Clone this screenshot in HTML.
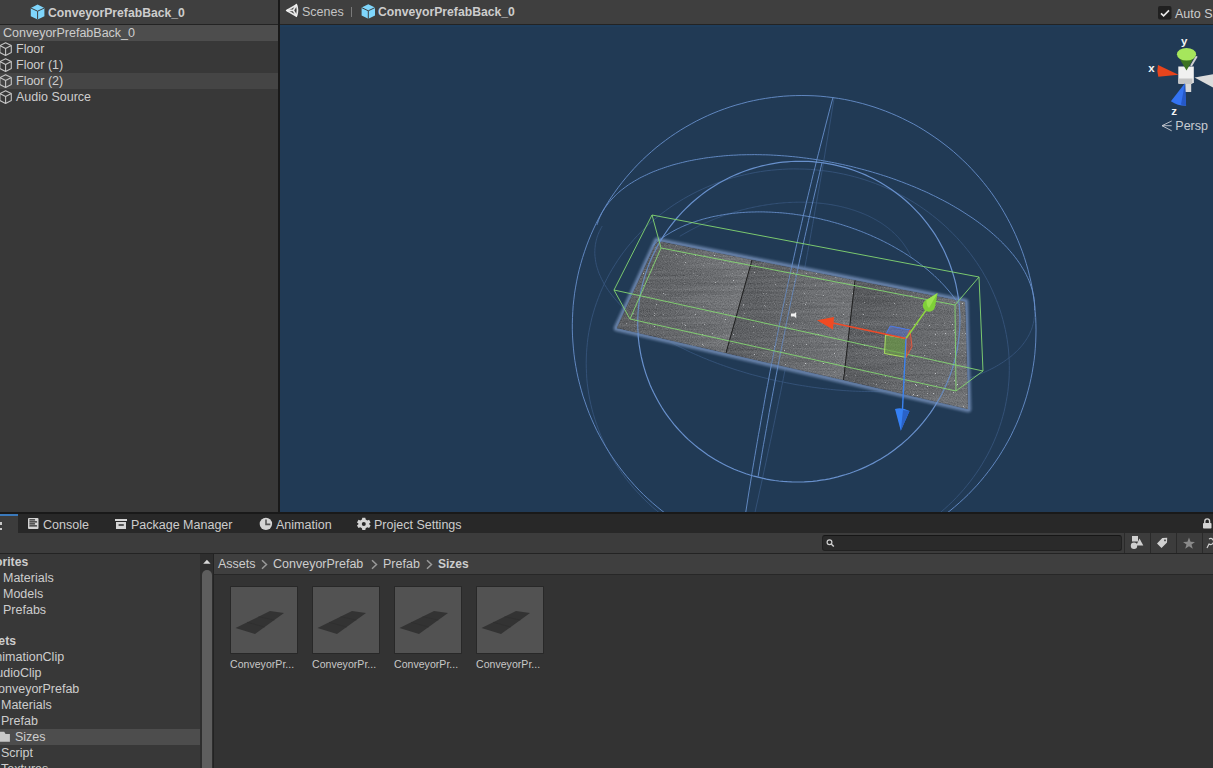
<!DOCTYPE html>
<html><head><meta charset="utf-8">
<style>
*{box-sizing:border-box;margin:0;padding:0}
html,body{width:1213px;height:768px;overflow:hidden;background:#383838;font-family:"Liberation Sans",sans-serif;font-size:12.5px;color:#cdcdcd}
.a{position:absolute}
.t{position:absolute;white-space:nowrap;line-height:16px;height:16px}
.b{font-weight:bold;font-size:12.2px}
svg{position:absolute;overflow:visible}
</style></head><body>
<!-- HIERARCHY -->
<div class="a" style="left:0;top:0;width:278px;height:24px;background:#3f3f3f"></div>
<div class="a" style="left:0;top:24px;width:278px;height:1px;background:#232323"></div>
<div class="a" style="left:0;top:25px;width:278px;height:16px;background:#4d4d4d"></div>
<div class="a" style="left:0;top:73px;width:278px;height:16px;background:#454545"></div>
<svg style="left:0;top:0" width="278" height="110">
  <g fill="#7fd6fc">
    <path d="M37.6 4.6 L44.4 8 L44.4 16.2 L37.6 19.4 L30.8 16.2 L30.8 8 Z"/>
  </g>
  <g stroke="#3f3f3f" stroke-width="1" fill="none">
    <path d="M30.8 8 L37.6 11.2 L44.4 8 M37.6 11.2 L37.6 19.4"/>
  </g>
  <g stroke="#c4c4c4" stroke-width="1.1" fill="none" stroke-linejoin="round">
    <g transform="translate(0,41)"><path d="M5.6 1.7 L11.3 4.6 L11.3 11.5 L5.6 14.4 L-0.1 11.5 L-0.1 4.6 Z M-0.1 4.6 L5.6 7.5 L11.3 4.6 M5.6 7.5 L5.6 14.4"/></g>
    <g transform="translate(0,57)"><path d="M5.6 1.7 L11.3 4.6 L11.3 11.5 L5.6 14.4 L-0.1 11.5 L-0.1 4.6 Z M-0.1 4.6 L5.6 7.5 L11.3 4.6 M5.6 7.5 L5.6 14.4"/></g>
    <g transform="translate(0,73)"><path d="M5.6 1.7 L11.3 4.6 L11.3 11.5 L5.6 14.4 L-0.1 11.5 L-0.1 4.6 Z M-0.1 4.6 L5.6 7.5 L11.3 4.6 M5.6 7.5 L5.6 14.4"/></g>
    <g transform="translate(0,89)"><path d="M5.6 1.7 L11.3 4.6 L11.3 11.5 L5.6 14.4 L-0.1 11.5 L-0.1 4.6 Z M-0.1 4.6 L5.6 7.5 L11.3 4.6 M5.6 7.5 L5.6 14.4"/></g>
  </g>
</svg>
<div class="t b" style="left:48px;top:5px">ConveyorPrefabBack_0</div>
<div class="t" style="left:3px;top:25px">ConveyorPrefabBack_0</div>
<div class="t" style="left:16px;top:41px">Floor</div>
<div class="t" style="left:16px;top:57px">Floor (1)</div>
<div class="t" style="left:16px;top:73px">Floor (2)</div>
<div class="t" style="left:16px;top:89px">Audio Source</div>
<div class="a" style="left:278px;top:0;width:2px;height:512px;background:#191919"></div>
<!-- SCENE HEADER -->
<div class="a" style="left:280px;top:0;width:933px;height:24px;background:#3f3f3f"></div>
<div class="a" style="left:280px;top:24px;width:933px;height:1px;background:#232323"></div>
<svg style="left:280px;top:0" width="933" height="24">
  <g stroke="#e8e8e8" stroke-width="1.7" fill="none" stroke-linejoin="round">
    <path d="M6.8 10.4 L16.4 4.9 Q18.6 10.4 16.4 15.9 Z"/>
    <path d="M13.3 10.4 L7.5 10.4 M13.3 10.4 L16 5.8 M13.3 10.4 L16 15"/>
  </g>
  <path d="M16.9 3.6 L14.5 5.6 L17.3 6.5 Z M16.9 17.2 L14.5 15.2 L17.3 14.3 Z M5.6 10.4 L8.4 9 L8.4 11.8 Z" fill="#f0f0f0"/>
  <g fill="#7fd6fc">
    <path d="M88.3 4.2 L95 7.6 L95 15.6 L88.3 18.8 L81.6 15.6 L81.6 7.6 Z"/>
  </g>
  <g stroke="#3f3f3f" stroke-width="1" fill="none">
    <path d="M81.6 7.6 L88.3 10.8 L95 7.6 M88.3 10.8 L88.3 18.8"/>
  </g>
  <rect x="878" y="6" width="13.5" height="13.5" rx="2" fill="#202020"/>
  <path d="M881 13.4 L883.6 15.8 L889 10.4" stroke="#e8e8e8" stroke-width="1.7" fill="none"/>
</svg>
<div class="t" style="left:302px;top:4px;color:#c4c4c4">Scenes</div>
<div class="a" style="left:351px;top:7px;width:1px;height:10px;background:#7a7a7a"></div>
<div class="t b" style="left:378px;top:4px">ConveyorPrefabBack_0</div>
<div class="t" style="left:1175px;top:6px">Auto Save</div>
<!-- SCENE VIEW -->
<div class="a" id="scene" style="left:280px;top:25px;width:933px;height:487px;background:#213a55;overflow:hidden"></div>
<!--SCENE--><svg style="left:280px;top:25px" width="933" height="487" viewBox="280 25 933 487">
<defs>
<filter id="noise" x="0" y="0" width="100%" height="100%" color-interpolation-filters="sRGB">
  <feTurbulence type="fractalNoise" baseFrequency="0.85" numOctaves="2" seed="7" result="n"/>
  <feColorMatrix in="n" type="matrix" values="1 0 0 0 0  1 0 0 0 0  1 0 0 0 0  0 0 0 0 1" result="g"/>
  <feTurbulence type="fractalNoise" baseFrequency="0.012 0.35" numOctaves="2" seed="11" result="n2"/>
  <feColorMatrix in="n2" type="matrix" values="1 0 0 0 0  1 0 0 0 0  1 0 0 0 0  0 0 0 0 1" result="g2"/>
  <feTurbulence type="turbulence" baseFrequency="1.1" numOctaves="1" seed="23" result="n3"/>
  <feColorMatrix in="n3" type="matrix" values="0 0 0 0 1  0 0 0 0 1  0 0 0 0 1  6 0 0 0 -2.9" result="sp"/>
  <feComposite in="SourceGraphic" in2="g" operator="arithmetic" k1="0" k2="1" k3="0.22" k4="-0.11" result="m"/>
  <feComposite in="m" in2="g2" operator="arithmetic" k1="0" k2="1" k3="0.12" k4="-0.06" result="m2"/>
  <feComposite in="sp" in2="m2" operator="arithmetic" k1="0" k2="0.35" k3="1" k4="0" result="m3"/>
  <feComposite in="m3" in2="SourceAlpha" operator="in"/>
</filter>
<filter id="glow" x="-10%" y="-10%" width="120%" height="120%"><feGaussianBlur stdDeviation="1.2"/></filter>
<clipPath id="sc"><rect x="280" y="25" width="933" height="487"/></clipPath>
<clipPath id="outs"><path clip-rule="evenodd" d="M280 25 H1213 V512 H280 Z M657 241 L965 302 L968 409 L617 328 Z"/></clipPath>
<clipPath id="ins"><path d="M657 241 L965 302 L968 409 L617 328 Z"/></clipPath>
</defs>
<g clip-path="url(#sc)">
<rect x="280" y="25" width="933" height="2" fill="#1f3d5b"/>
<path d="M782.3 561.6 L776.8 561.1 L771.2 560.5 L765.7 559.7 L760.2 558.8 L754.8 557.7 L749.3 556.6 L743.9 555.2 L738.6 553.8 L733.3 552.2 L728.0 550.5 L722.8 548.7 L717.6 546.8 L712.5 544.7 L707.4 542.5 L702.4 540.2 L697.5 537.7 L692.6 535.2 L687.8 532.5 L683.1 529.7 L678.5 526.8 L673.9 523.7 L669.5 520.6 L665.1 517.4 L660.8 514.0 L656.6 510.6 L652.5 507.1 L648.5 503.4 L644.6 499.7 L640.8 495.8 L637.2 491.9 L633.6 487.9 L630.1 483.8 L626.8 479.7 L623.6 475.4 L620.5 471.1 L617.5 466.7 L614.7 462.2 L611.9 457.7 L609.3 453.1 L606.9 448.4 L604.6 443.7 L602.4 438.9 L600.3 434.1 L598.4 429.2 L596.6 424.3 L594.9 419.3 L593.4 414.4 L592.0 409.3 L590.8 404.3 L589.7 399.2 L588.8 394.1 L588.0 389.0 L587.3 383.8 L586.8 378.7 L586.5 373.5 L586.3 368.3 L586.2 363.2 L586.3 358.0 L586.5 352.8 L586.9 347.7 L587.4 342.5 L588.0 337.4 L588.8 332.3 L589.8 327.2 L590.9 322.2 L592.1 317.1 L593.5 312.1 L595.0 307.2 L596.7 302.3 L598.5 297.4 L600.4 292.6 L602.5 287.8 L604.7 283.1 L607.1 278.4 L609.5 273.8 L612.1 269.3 L614.9 264.8 L617.7 260.4 L620.7 256.0 L623.8 251.8 L627.0 247.6 L630.4 243.5 L633.8 239.5 L637.4 235.6 L641.1 231.7 L644.9 228.0 L648.8 224.4 L652.8 220.8 L656.9 217.4 L661.1 214.0 L665.4 210.8 L669.8 207.6 L674.2 204.6 L678.8 201.7 L683.4 198.9 L688.2 196.2 L693.0 193.6 L697.8 191.2 L702.8 188.9 L707.8 186.7 L712.8 184.6 L718.0 182.6 L723.1 180.8 L728.4 179.1 L733.6 177.5 L739.0 176.1 L744.3 174.8 L749.7 173.6 L755.2 172.5 L760.6 171.6 L766.1 170.8 L771.6 170.2 L777.1 169.7 L782.7 169.3 L788.2 169.0 L793.8 168.9 L799.4 169.0 L804.9 169.1 L810.5 169.4 L816.0 169.9 L821.6 170.5 L827.1 171.2 L832.6 172.0 L838.1 173.0 L843.5 174.1 L848.9 175.3 L854.3 176.7 L859.6 178.2 L864.9 179.8 L870.2 181.6 L875.4 183.5 L880.5 185.5 L885.6 187.7 L890.7 189.9 L895.6 192.3 L900.5 194.8 L905.3 197.4 L910.1 200.2 L914.8 203.0 L919.4 206.0 L923.9 209.1 L928.3 212.2 L932.6 215.5 L936.9 218.9 L941.0 222.4 L945.1 226.0 L949.0 229.7 L952.8 233.5 L956.6 237.4 L960.2 241.3 L963.7 245.4 L967.1 249.5 L970.4 253.7 L973.5 258.0 L976.6 262.4 L979.5 266.8 L982.3 271.3 L984.9 275.9 L987.5 280.5 L989.9 285.2 L992.1 290.0 L994.2 294.8 L996.2 299.6 L998.1 304.5 L999.8 309.4 L1001.4 314.4 L1002.8 319.4 L1004.1 324.5 L1005.3 329.5 L1006.3 334.6 L1007.2 339.7 L1007.9 344.9 L1008.5 350.0 L1008.9 355.2 L1009.2 360.3 L1009.3 365.5 L1009.3 370.7 L1009.2 375.9 L1008.9 381.0 L1008.4 386.2 L1007.9 391.3 L1007.1 396.4 L1006.2 401.5 L1005.2 406.6 L1004.1 411.6 L1002.7 416.6 L1001.3 421.6 L999.7 426.5 L998.0 431.4 L996.1 436.3 L994.1 441.1 L992.0 445.8 L989.7 450.5 L987.3 455.2 L984.7 459.7 L982.1 464.2 L979.3 468.7 L976.3 473.1 L973.3 477.3 L970.1 481.6 L966.8 485.7 L963.4 489.8 L959.9 493.7 L956.3 497.6 L952.6 501.4 L948.7 505.1 L944.8 508.7 L940.7 512.2 L936.6 515.6 L932.3 518.9 L928.0 522.1 L923.6 525.1 L919.0 528.1 L914.4 531.0 L909.8 533.7 L905.0 536.3 L900.2 538.8 L895.3 541.2 L890.3 543.5 L885.3 545.6 L880.2 547.7 L875.0 549.6 L869.8 551.3 L864.6 553.0 L859.3 554.5 L853.9 555.9 L848.5 557.1 L843.1 558.2 L837.7 559.2 L832.2 560.1 L826.7 560.8 L821.2 561.3 L815.6 561.8 L810.1 562.1 L804.5 562.3 L799.0 562.3 L793.4 562.2 L787.8 562.0 L782.3 561.6" stroke="#35537a" stroke-width="0.9" fill="none" />
<path d="M1034.6 310.1 L1034.7 311.6 L1034.6 313.1 L1034.6 314.6 L1034.5 316.1 L1034.3 317.6 L1034.1 319.1 L1033.9 320.5 L1033.6 322.0 L1033.3 323.4 L1032.9 324.9 L1032.5 326.3 L1032.1 327.8 L1031.6 329.2 L1031.0 330.6 L1030.4 332.0 L1029.8 333.4 L1029.1 334.8 L1028.4 336.1 L1027.6 337.5 L1026.8 338.8 L1025.9 340.2 L1025.0 341.5 L1024.1 342.8 L1023.1 344.1 L1022.1 345.4 L1021.0 346.7 L1019.9 347.9 L1018.7 349.2 L1017.6 350.4 L1016.3 351.6 L1015.0 352.8 L1013.7 354.0 L1012.4 355.2 L1011.0 356.4 L1009.5 357.5 L1008.0 358.6 L1006.5 359.7 L1005.0 360.8 L1003.4 361.9 L1001.7 363.0 L1000.0 364.0 L998.3 365.1 L996.6 366.1 L994.8 367.1 L993.0 368.1 L991.1 369.0 L989.2 370.0 L987.3 370.9 L985.3 371.8 L983.3 372.7 L981.3 373.6 L979.2 374.4 L977.1 375.3 L975.0 376.1 L972.8 376.9 L970.6 377.6 L968.3 378.4 L966.1 379.1 L963.8 379.9 L961.4 380.5 L959.1 381.2 L956.7 381.9 L954.3 382.5 L951.8 383.1 L949.4 383.7 L946.9 384.3 L944.3 384.9 L941.8 385.4 L939.2 385.9 L936.6 386.4 L934.0 386.9 L931.3 387.3 L928.6 387.7 L925.9 388.1 L923.2 388.5 L920.4 388.9 L917.7 389.2 L914.9 389.5 L912.1 389.8 L909.2 390.1 L906.4 390.4 L903.5 390.6 L900.6 390.8 L897.7 391.0 L894.8 391.1 L891.9 391.3 L888.9 391.4 L886.0 391.5 L883.0 391.6 L880.0 391.6 L877.0 391.6 L873.9 391.6 L870.9 391.6 L867.9 391.6 L864.8 391.5 L861.7 391.4 L858.6 391.3 L855.6 391.2 L852.5 391.1 L849.4 390.9 L846.3 390.7 L843.1 390.5 L840.0 390.2 L836.9 390.0 L833.8 389.7 L830.6 389.4 L827.5 389.0 L824.3 388.7 L821.2 388.3 L818.0 387.9 L814.9 387.5 L811.8 387.1 L808.6 386.6 L805.5 386.1 L802.3 385.6 L799.2 385.1 L796.0 384.6 L792.9 384.0 L789.8 383.4 L786.7 382.8 L783.5 382.2 L780.4 381.5 L777.3 380.9 L774.2 380.2 L771.1 379.5 L768.1 378.7 L765.0 378.0 L761.9 377.2 L758.9 376.4 L755.9 375.6 L752.8 374.8 L749.8 374.0 L746.8 373.1 L743.8 372.2 L740.9 371.3 L737.9 370.4 L735.0 369.5 L732.0 368.5 L729.1 367.5 L726.2 366.5 L723.4 365.5 L720.5 364.5 L717.7 363.5 L714.9 362.4 L712.1 361.3 L709.3 360.3 L706.6 359.1 L703.8 358.0 L701.1 356.9 L698.5 355.7 L695.8 354.6 L693.2 353.4 L690.5 352.2 L688.0 351.0 L685.4 349.7 L682.9 348.5 L680.4 347.3 L677.9 346.0 L675.4 344.7 L673.0 343.4 L670.6 342.1 L668.3 340.8 L665.9 339.5 L663.6 338.1 L661.4 336.8 L659.1 335.4 L656.9 334.0 L654.8 332.6 L652.6 331.2 L650.5 329.8 L648.4 328.4 L646.4 327.0 L644.4 325.6 L642.4 324.1 L640.5 322.7 L638.6 321.2 L636.7 319.7 L634.9 318.3 L633.1 316.8 L631.3 315.3 L629.6 313.8 L627.9 312.3 L626.3 310.8 L624.7 309.3 L623.1 307.7 L621.6 306.2 L620.1 304.7 L618.7 303.2 L617.3 301.6 L615.9 300.1 L614.6 298.5 L613.3 297.0 L612.1 295.4 L610.9 293.9 L609.7 292.3 L608.6 290.7 L607.5 289.2 L606.5 287.6 L605.5 286.0 L604.5 284.5 L603.6 282.9 L602.8 281.3 L602.0 279.8 L601.2 278.2 L600.5 276.6 L599.8 275.1 L599.1 273.5 L598.5 271.9 L598.0 270.4 L597.5 268.8 L597.0 267.3 L596.6 265.7 L596.2 264.2 L595.9 262.6 L595.6 261.1 L595.4 259.6 L595.2 258.0 L595.0 256.5 L594.9 255.0 L594.8 253.5 L594.8 251.9 L594.9 250.4 L594.9 248.9 L595.1 247.5 L595.2 246.0 L595.4 244.5 L595.7 243.0 L596.0 241.6 L596.3 240.1 L596.7 238.7 L597.1 237.2 L597.6 235.8 L598.1 234.4 L598.7 233.0 L599.3 231.6 L600.0 230.2 L600.7 228.8 L601.4 227.5 L602.2 226.1" stroke="#35537a" stroke-width="0.9" fill="none" />
<path d="M679.8 236.3 L680.8 235.7 L681.8 235.1 L682.9 234.5 L683.9 233.9 L684.9 233.3 L686.0 232.7 L687.0 232.1 L688.0 231.6 L689.1 231.0 L690.1 230.4 L691.2 229.8 L692.3 229.3 L693.3 228.7 L694.4 228.2 L695.5 227.6 L696.5 227.1 L697.6 226.6 L698.7 226.0 L699.8 225.5 L700.9 225.0 L702.0 224.5 L703.1 223.9 L704.2 223.4 L705.3 222.9 L706.4 222.4 L707.5 222.0 L708.7 221.5 L709.8 221.0 L710.9 220.5 L712.0 220.1 L713.2 219.6 L714.3 219.1 L715.4 218.7 L716.6 218.2 L717.7 217.8 L718.9 217.4 L720.0 216.9 L721.2 216.5 L722.3 216.1 L723.5 215.7 L724.6 215.3 L725.8 214.9 L727.0 214.5 L728.1 214.1 L729.3 213.7 L730.5 213.3 L731.6 213.0 L732.8 212.6 L734.0 212.2 L735.2 211.9 L736.4 211.5 L737.5 211.2 L738.7 210.9 L739.9 210.5 L741.1 210.2 L742.3 209.9 L743.5 209.6 L744.7 209.3 L745.9 209.0 L747.0 208.7 L748.2 208.4 L749.4 208.1 L750.6 207.9 L751.8 207.6 L753.0 207.3 L754.2 207.1 L755.4 206.8 L756.6 206.6 L757.8 206.4 L759.0 206.1 L760.2 205.9 L761.4 205.7 L762.6 205.5 L763.8 205.3 L765.0 205.1 L766.2 204.9 L767.4 204.7 L768.6 204.5 L769.8 204.4 L771.0 204.2 L772.2 204.0 L773.4 203.9 L774.6 203.7 L775.8 203.6 L777.0 203.5 L778.2 203.3 L779.4 203.2 L780.6 203.1 L781.7 203.0 L782.9 202.9 L784.1 202.8 L785.3 202.7 L786.5 202.6 L787.7 202.6 L788.9 202.5 L790.0 202.4 L791.2 202.4 L792.4 202.3 L793.6 202.3 L794.8 202.3 L795.9 202.2 L797.1 202.2 L798.3 202.2 L799.4 202.2 L800.6 202.2 L801.8 202.2 L802.9 202.2 L804.1 202.2 L805.2 202.2 L806.4 202.3 L807.5 202.3 L808.7 202.4 L809.8 202.4 L811.0 202.5 L812.1 202.5 L813.2 202.6 L814.4 202.7 L815.5 202.8 L816.6 202.9 L817.7 203.0 L818.9 203.1 L820.0 203.2 L821.1 203.3 L822.2 203.4 L823.3 203.5 L824.4 203.7 L825.5 203.8 L826.6 204.0 L827.7 204.1 L828.8 204.3 L829.9 204.5 L830.9 204.6 L832.0 204.8 L833.1 205.0 L834.1 205.2 L835.2 205.4 L836.3 205.6 L837.3 205.8 L838.4 206.0 L839.4 206.3 L840.4 206.5 L841.5 206.7 L842.5 207.0 L843.5 207.2 L844.6 207.5 L845.6 207.8 L846.6 208.0 L847.6 208.3 L848.6 208.6 L849.6 208.9 L850.6 209.2 L851.6 209.5 L852.5 209.8 L853.5 210.1 L854.5 210.4 L855.4 210.7 L856.4 211.1 L857.3 211.4 L858.3 211.8 L859.2 212.1 L860.2 212.5 L861.1 212.8 L862.0 213.2 L862.9 213.6 L863.8 213.9 L864.7 214.3 L865.6 214.7 L866.5 215.1 L867.4 215.5 L868.3 215.9 L869.1 216.3 L870.0 216.8 L870.9 217.2 L871.7 217.6 L872.6 218.1 L873.4 218.5 L874.2 219.0 L875.1 219.4 L875.9 219.9 L876.7 220.3 L877.5 220.8 L878.3 221.3 L879.1 221.8 L879.9 222.2 L880.6 222.7 L881.4 223.2 L882.2 223.7 L882.9 224.2 L883.7 224.8 L884.4 225.3 L885.1 225.8 L885.9 226.3 L886.6 226.9 L887.3 227.4 L888.0 227.9 L888.7 228.5 L889.4 229.1 L890.1 229.6 L890.7 230.2 L891.4 230.7 L892.0 231.3 L892.7 231.9 L893.3 232.5 L894.0 233.1 L894.6 233.7 L895.2 234.3 L895.8 234.9 L896.4 235.5 L897.0 236.1 L897.6 236.7 L898.2 237.3 L898.7 237.9 L899.3 238.6 L899.8 239.2 L900.4 239.8 L900.9 240.5 L901.4 241.1 L902.0 241.8 L902.5 242.4 L903.0 243.1 L903.5 243.8 L903.9 244.4 L904.4 245.1 L904.9 245.8 L905.3 246.5 L905.8 247.1 L906.2 247.8 L906.7 248.5 L907.1 249.2 L907.5 249.9 L907.9 250.6 L908.3 251.3 L908.7 252.0 L909.1 252.7 L909.4 253.4 L909.8 254.2 L910.1 254.9 L910.5 255.6 L910.8 256.3" stroke="#35537a" stroke-width="0.9" fill="none" />
<path d="M834.1 98.0 L832.9 105.0 L831.8 112.0 L830.7 119.1 L829.5 126.1 L828.4 133.1 L827.2 140.1 L826.0 147.1 L824.9 154.1 L823.7 161.2 L822.5 168.2 L821.3 175.2 L820.1 182.2 L818.9 189.2 L817.6 196.2 L816.4 203.3 L815.2 210.3 L813.9 217.3 L812.7 224.3 L811.4 231.3 L810.2 238.3 L808.9 245.4 L807.6 252.4 L806.3 259.4 L805.0 266.4 L803.7 273.4 L802.4 280.4 L801.1 287.5 L799.8 294.5 L798.5 301.5 L797.1 308.5 L795.8 315.5 L794.4 322.5 L793.1 329.6 L791.7 336.6 L790.3 343.6 L788.9 350.6 L787.5 357.6 L786.1 364.6 L784.7 371.7 L783.3 378.7 L781.9 385.7 L780.5 392.7 L779.0 399.7 L777.6 406.7 L776.1 413.8 L774.7 420.8 L773.2 427.8 L771.8 434.8 L770.3 441.8 L768.8 448.8 L767.3 455.9 L765.8 462.9 L764.3 469.9 L762.8 476.9 L761.3 483.9 L759.7 490.9 L758.2 498.0 L756.6 505.0 L755.1 512.0" stroke="#35537a" stroke-width="0.9" fill="none" />
<path d="M657 241 L965 302 L968 409 L617 328 Z" fill="none" stroke="#6882a8" stroke-width="7" stroke-linejoin="round" filter="url(#glow)" opacity="0.85"/>
<path d="M657 241 L965 302 L968 409 L617 328 Z" fill="none" stroke="#617ba2" stroke-width="4.2" stroke-linejoin="round"/>
<linearGradient id="t1" gradientUnits="userSpaceOnUse" x1="625" y1="290" x2="745" y2="310"><stop offset="0" stop-color="#5c5e61"/><stop offset="0.55" stop-color="#67696c"/><stop offset="1" stop-color="#75777a"/></linearGradient>
<linearGradient id="t2" gradientUnits="userSpaceOnUse" x1="735" y1="310" x2="850" y2="330"><stop offset="0" stop-color="#5c5e61"/><stop offset="0.55" stop-color="#686a6d"/><stop offset="1" stop-color="#737578"/></linearGradient>
<linearGradient id="t3" gradientUnits="userSpaceOnUse" x1="850" y1="330" x2="968" y2="350"><stop offset="0" stop-color="#5b5d60"/><stop offset="0.6" stop-color="#67696c"/><stop offset="1" stop-color="#6f7174"/></linearGradient>
<g filter="url(#noise)">
<path d="M657 241 L752 260 L726 353 L617 328 Z" fill="url(#t1)" stroke="url(#t1)" stroke-width="0.6"/>
<path d="M752 260 L855 280.5 L843.5 380 L726 353 Z" fill="url(#t2)" stroke="url(#t2)" stroke-width="0.6"/>
<path d="M855 280.5 L965 302 L968 409 L843.5 380 Z" fill="url(#t3)" stroke="url(#t3)" stroke-width="0.6"/>
</g>
<path d="M752 260 L726 353 M855 280.5 L843.5 380" stroke="#202020" stroke-width="1" fill="none"/>
<g clip-path="url(#outs)"><path d="M675.6 133.3 L680.7 130.0 L685.9 126.9 L691.2 123.9 L696.5 121.0 L702.0 118.3 L707.5 115.7 L713.0 113.3 L718.7 111.0 L724.4 108.9 L730.1 106.9 L735.9 105.1 L741.8 103.5 L747.7 101.9 L753.6 100.6 L759.6 99.4 L765.6 98.4 L771.6 97.5 L777.6 96.8 L783.7 96.2 L789.8 95.8 L795.8 95.6 L801.9 95.5 L808.0 95.6 L814.1 95.8 L820.2 96.2 L826.3 96.8 L832.3 97.5 L838.4 98.4 L844.4 99.4 L850.4 100.6 L856.3 102.0 L862.3 103.5 L868.1 105.2 L874.0 107.0 L879.8 109.0 L885.5 111.1 L891.2 113.4 L896.8 115.8 L902.4 118.4 L907.8 121.1 L913.3 123.9 L918.6 126.9 L923.9 130.1 L929.0 133.4 L934.1 136.8 L939.1 140.3 L944.0 144.0 L948.9 147.8 L953.6 151.7 L958.2 155.8 L962.7 160.0 L967.1 164.2 L971.3 168.6 L975.5 173.2 L979.6 177.8 L983.5 182.5 L987.3 187.3 L991.0 192.2 L994.5 197.2 L997.9 202.3 L1001.2 207.5 L1004.3 212.8 L1007.3 218.2 L1010.2 223.6 L1012.9 229.1 L1015.5 234.7 L1017.9 240.3 L1020.2 246.0 L1022.4 251.8 L1024.4 257.6 L1026.2 263.4 L1027.9 269.3 L1029.4 275.3 L1030.8 281.2 L1032.0 287.2 L1033.0 293.3 L1033.9 299.3 L1034.7 305.4 L1035.2 311.5 L1035.7 317.6 L1035.9 323.8 L1036.0 329.9 L1035.9 336.0 L1035.7 342.1 L1035.3 348.2 L1034.8 354.3 L1034.1 360.4 L1033.2 366.4 L1032.2 372.5 L1031.0 378.4 L1029.7 384.4 L1028.2 390.3 L1026.6 396.2 L1024.8 402.0 L1022.8 407.8 L1020.7 413.5 L1018.5 419.2 L1016.1 424.8 L1013.5 430.3 L1010.9 435.8 L1008.0 441.2 L1005.0 446.5 L1001.9 451.7 L998.7 456.9 L995.3 461.9 L991.8 466.9 L988.1 471.8 L984.4 476.5 L980.5 481.2 L976.5 485.8 L972.3 490.2 L968.1 494.6 L963.7 498.8 L959.2 502.9 L954.6 506.9 L949.9 510.8 L945.2 514.5 L940.3 518.1 L935.3 521.6 L930.2 524.9 L925.1 528.1 L919.8 531.2 L914.5 534.1 L909.1 536.9 L903.6 539.6 L898.1 542.1 L892.5 544.4 L886.8 546.6 L881.1 548.7 L875.3 550.6 L869.5 552.3 L863.6 553.9 L857.7 555.3 L851.8 556.6 L845.8 557.7 L839.8 558.7 L833.7 559.5 L827.7 560.1 L821.6 560.6 L815.5 560.9 L809.4 561.1 L803.3 561.1 L797.2 560.9 L791.2 560.6 L785.1 560.1 L779.0 559.5 L773.0 558.7 L766.9 557.7 L760.9 556.6 L755.0 555.3 L749.0 553.9 L743.1 552.3 L737.3 550.5 L731.4 548.6 L725.7 546.6 L720.0 544.4 L714.3 542.0 L708.7 539.5 L703.2 536.9 L697.8 534.1 L692.4 531.2 L687.1 528.1 L681.9 524.9 L676.7 521.5 L671.7 518.1 L666.7 514.4 L661.9 510.7 L657.1 506.8 L652.4 502.8 L647.9 498.7 L643.4 494.5 L639.1 490.2 L634.9 485.7 L630.8 481.1 L626.8 476.5 L622.9 471.7 L619.2 466.8 L615.6 461.9 L612.1 456.8 L608.8 451.7 L605.5 446.4 L602.5 441.1 L599.5 435.7 L596.7 430.3 L594.1 424.7 L591.6 419.1 L589.2 413.4 L587.0 407.7 L585.0 401.9 L583.0 396.1 L581.3 390.2 L579.7 384.3 L578.2 378.3 L576.9 372.4 L575.8 366.3 L574.8 360.3 L574.0 354.2 L573.4 348.1 L572.9 342.0 L572.5 335.9 L572.3 329.8 L572.3 323.7 L572.5 317.5 L572.8 311.4 L573.2 305.3 L573.9 299.2 L574.6 293.2 L575.6 287.1 L576.7 281.1 L577.9 275.2 L579.3 269.2 L580.9 263.3 L582.6 257.5 L584.5 251.7 L586.5 245.9 L588.7 240.2 L591.0 234.6 L593.5 229.0 L596.1 223.5 L598.9 218.1 L601.8 212.7 L604.8 207.5 L608.0 202.3 L611.3 197.2 L614.8 192.2 L618.4 187.2 L622.1 182.4 L625.9 177.7 L629.9 173.1 L633.9 168.6 L638.1 164.2 L642.4 159.9 L646.9 155.7 L651.4 151.7 L656.0 147.7 L660.8 143.9 L665.6 140.3 L670.5 136.7 L675.6 133.3" stroke="#6890cc" stroke-width="0.9" fill="none" />
<path d="M597.0 224.8 L597.4 223.4 L597.9 222.0 L598.4 220.7 L598.9 219.3 L599.4 218.0 L600.0 216.7 L600.7 215.4 L601.3 214.0 L602.0 212.7 L602.7 211.5 L603.5 210.2 L604.3 208.9 L605.1 207.6 L606.0 206.4 L606.9 205.1 L607.8 203.9 L608.7 202.7 L609.7 201.5 L610.8 200.3 L611.8 199.1 L612.9 198.0 L614.0 196.8 L615.2 195.7 L616.4 194.5 L617.6 193.4 L618.8 192.3 L620.1 191.2 L621.4 190.1 L622.8 189.1 L624.1 188.0 L625.5 187.0 L627.0 185.9 L628.4 184.9 L629.9 183.9 L631.5 182.9 L633.0 182.0 L634.6 181.0 L636.2 180.1 L637.8 179.2 L639.5 178.2 L641.2 177.3 L642.9 176.5 L644.7 175.6 L646.5 174.8 L648.3 173.9 L650.1 173.1 L651.9 172.3 L653.8 171.5 L655.7 170.8 L657.7 170.0 L659.6 169.3 L661.6 168.6 L663.6 167.9 L665.7 167.2 L667.7 166.5 L669.8 165.9 L671.9 165.2 L674.0 164.6 L676.2 164.0 L678.3 163.5 L680.5 162.9 L682.7 162.4 L685.0 161.8 L687.2 161.3 L689.5 160.8 L691.8 160.4 L694.1 159.9 L696.5 159.5 L698.8 159.1 L701.2 158.7 L703.6 158.3 L706.0 157.9 L708.4 157.6 L710.8 157.3 L713.3 157.0 L715.8 156.7 L718.3 156.4 L720.8 156.2 L723.3 155.9 L725.8 155.7 L728.4 155.5 L730.9 155.3 L733.5 155.2 L736.1 155.1 L738.7 154.9 L741.3 154.8 L744.0 154.8 L746.6 154.7 L749.2 154.7 L751.9 154.7 L754.6 154.6 L757.2 154.7 L759.9 154.7 L762.6 154.8 L765.3 154.8 L768.1 154.9 L770.8 155.0 L773.5 155.2 L776.2 155.3 L779.0 155.5 L781.7 155.7 L784.5 155.9 L787.2 156.1 L790.0 156.4 L792.7 156.6 L795.5 156.9 L798.3 157.2 L801.1 157.5 L803.8 157.9 L806.6 158.2 L809.4 158.6 L812.2 159.0 L815.0 159.4 L817.7 159.9 L820.5 160.3 L823.3 160.8 L826.1 161.3 L828.8 161.8 L831.6 162.3 L834.4 162.8 L837.2 163.4 L839.9 164.0 L842.7 164.5 L845.4 165.2 L848.2 165.8 L850.9 166.4 L853.7 167.1 L856.4 167.8 L859.1 168.5 L861.8 169.2 L864.6 169.9 L867.3 170.7 L870.0 171.4 L872.6 172.2 L875.3 173.0 L878.0 173.8 L880.6 174.6 L883.3 175.5 L885.9 176.3 L888.5 177.2 L891.2 178.1 L893.8 179.0 L896.3 179.9 L898.9 180.9 L901.5 181.8 L904.0 182.8 L906.6 183.8 L909.1 184.8 L911.6 185.8 L914.1 186.8 L916.5 187.8 L919.0 188.9 L921.4 190.0 L923.9 191.0 L926.3 192.1 L928.7 193.2 L931.0 194.4 L933.4 195.5 L935.7 196.6 L938.0 197.8 L940.3 199.0 L942.6 200.1 L944.8 201.3 L947.1 202.5 L949.3 203.7 L951.5 205.0 L953.6 206.2 L955.8 207.5 L957.9 208.7 L960.0 210.0 L962.1 211.3 L964.1 212.6 L966.1 213.9 L968.1 215.2 L970.1 216.5 L972.1 217.8 L974.0 219.1 L975.9 220.5 L977.8 221.8 L979.6 223.2 L981.5 224.6 L983.3 226.0 L985.0 227.3 L986.8 228.7 L988.5 230.1 L990.2 231.5 L991.9 233.0 L993.5 234.4 L995.1 235.8 L996.7 237.2 L998.2 238.7 L999.7 240.1 L1001.2 241.6 L1002.7 243.0 L1004.1 244.5 L1005.5 246.0 L1006.9 247.4 L1008.2 248.9 L1009.5 250.4 L1010.8 251.9 L1012.0 253.4 L1013.3 254.8 L1014.4 256.3 L1015.6 257.8 L1016.7 259.3 L1017.8 260.8 L1018.8 262.3 L1019.9 263.8 L1020.8 265.3 L1021.8 266.9 L1022.7 268.4 L1023.6 269.9 L1024.5 271.4 L1025.3 272.9 L1026.1 274.4 L1026.8 275.9 L1027.5 277.4 L1028.2 278.9 L1028.9 280.4 L1029.5 282.0 L1030.1 283.5 L1030.6 285.0 L1031.1 286.5 L1031.6 288.0 L1032.1 289.5 L1032.5 291.0 L1032.8 292.5 L1033.2 294.0 L1033.5 295.4 L1033.8 296.9 L1034.0 298.4 L1034.2 299.9 L1034.4 301.4 L1034.5 302.8 L1034.6 304.3 L1034.6 305.8 L1034.7 307.2 L1034.7 308.7 L1034.6 310.1" stroke="#6890cc" stroke-width="0.9" fill="none" />
<path d="M652.7 245.8 L653.5 245.1 L654.3 244.3 L655.1 243.6 L655.9 242.9 L656.8 242.2 L657.6 241.5 L658.5 240.8 L659.4 240.1 L660.2 239.4 L661.2 238.8 L662.1 238.1 L663.0 237.4 L663.9 236.8 L664.9 236.2 L665.8 235.5 L666.8 234.9 L667.8 234.3 L668.8 233.7 L669.8 233.1 L670.8 232.5 L671.9 231.9 L672.9 231.3 L674.0 230.7 L675.0 230.2 L676.1 229.6 L677.2 229.0 L678.3 228.5 L679.4 228.0 L680.5 227.4 L681.6 226.9 L682.7 226.4 L683.9 225.9 L685.0 225.4 L686.2 224.9 L687.4 224.5 L688.6 224.0 L689.8 223.5 L691.0 223.1 L692.2 222.6 L693.4 222.2 L694.6 221.8 L695.9 221.4 L697.1 221.0 L698.4 220.6 L699.7 220.2 L700.9 219.8 L702.2 219.4 L703.5 219.0 L704.8 218.7 L706.1 218.3 L707.4 218.0 L708.8 217.7 L710.1 217.3 L711.4 217.0 L712.8 216.7 L714.1 216.4 L715.5 216.2 L716.9 215.9 L718.3 215.6 L719.6 215.4 L721.0 215.1 L722.4 214.9 L723.8 214.6 L725.2 214.4 L726.7 214.2 L728.1 214.0 L729.5 213.8 L731.0 213.6 L732.4 213.4 L733.8 213.3 L735.3 213.1 L736.8 213.0 L738.2 212.8 L739.7 212.7 L741.2 212.6 L742.7 212.5 L744.1 212.4 L745.6 212.3 L747.1 212.2 L748.6 212.1 L750.1 212.1 L751.6 212.0 L753.2 212.0 L754.7 212.0 L756.2 211.9 L757.7 211.9 L759.3 211.9 L760.8 211.9 L762.3 211.9 L763.9 211.9 L765.4 212.0 L767.0 212.0 L768.5 212.1 L770.1 212.1 L771.6 212.2 L773.2 212.3 L774.7 212.4 L776.3 212.5 L777.9 212.6 L779.4 212.7 L781.0 212.8 L782.6 212.9 L784.1 213.1 L785.7 213.2 L787.3 213.4 L788.8 213.6 L790.4 213.8 L792.0 213.9 L793.6 214.1 L795.2 214.4 L796.7 214.6 L798.3 214.8 L799.9 215.0 L801.5 215.3 L803.1 215.5 L804.6 215.8 L806.2 216.1 L807.8 216.4 L809.4 216.6 L811.0 216.9 L812.5 217.3 L814.1 217.6 L815.7 217.9 L817.3 218.2 L818.8 218.6 L820.4 218.9 L822.0 219.3 L823.5 219.7 L825.1 220.1 L826.7 220.4 L828.2 220.8 L829.8 221.2 L831.3 221.7 L832.9 222.1 L834.5 222.5 L836.0 223.0 L837.6 223.4 L839.1 223.9 L840.6 224.3 L842.2 224.8 L843.7 225.3 L845.2 225.8 L846.8 226.3 L848.3 226.8 L849.8 227.3 L851.3 227.8 L852.8 228.4 L854.3 228.9 L855.8 229.4 L857.3 230.0 L858.8 230.6 L860.3 231.1 L861.8 231.7 L863.3 232.3 L864.8 232.9 L866.2 233.5 L867.7 234.1 L869.1 234.7 L870.6 235.3 L872.0 236.0 L873.5 236.6 L874.9 237.3 L876.3 237.9 L877.8 238.6 L879.2 239.2 L880.6 239.9 L882.0 240.6 L883.4 241.3 L884.8 242.0 L886.1 242.7 L887.5 243.4 L888.9 244.1 L890.2 244.8 L891.6 245.6 L892.9 246.3 L894.3 247.1 L895.6 247.8 L896.9 248.6 L898.2 249.3 L899.5 250.1 L900.8 250.9 L902.1 251.6 L903.4 252.4 L904.6 253.2 L905.9 254.0 L907.2 254.8 L908.4 255.6 L909.6 256.5 L910.9 257.3 L912.1 258.1 L913.3 258.9 L914.5 259.8 L915.7 260.6 L916.8 261.5 L918.0 262.3 L919.2 263.2 L920.3 264.1 L921.5 264.9 L922.6 265.8 L923.7 266.7 L924.8 267.6 L925.9 268.5 L927.0 269.3 L928.1 270.2 L929.1 271.1 L930.2 272.1 L931.2 273.0 L932.3 273.9 L933.3 274.8 L934.3 275.7 L935.3 276.7 L936.3 277.6 L937.3 278.5 L938.2 279.5 L939.2 280.4 L940.1 281.4 L941.1 282.3 L942.0 283.3 L942.9 284.2 L943.8 285.2 L944.7 286.1 L945.5 287.1 L946.4 288.1 L947.2 289.0 L948.1 290.0 L948.9 291.0 L949.7 292.0 L950.5 293.0 L951.3 294.0 L952.1 294.9 L952.8 295.9 L953.6 296.9 L954.3 297.9 L955.0 298.9 L955.7 299.9 L956.4 300.9 L957.1 301.9 L957.8 302.9 L958.4 303.9" stroke="#6890cc" stroke-width="0.9" fill="none" />
<path d="M833.1 97.0 L831.2 104.0 L829.3 111.1 L827.5 118.1 L825.7 125.1 L823.9 132.2 L822.1 139.2 L820.3 146.2 L818.5 153.3 L816.7 160.3 L815.0 167.3 L813.2 174.4 L811.5 181.4 L809.8 188.4 L808.1 195.5 L806.4 202.5 L804.8 209.5 L803.1 216.6 L801.5 223.6 L799.9 230.6 L798.2 237.7 L796.6 244.7 L795.1 251.7 L793.5 258.8 L791.9 265.8 L790.4 272.8 L788.8 279.9 L787.3 286.9 L785.8 293.9 L784.3 301.0 L782.8 308.0 L781.4 315.1 L779.9 322.1 L778.5 329.1 L777.1 336.2 L775.7 343.2 L774.3 350.2 L772.9 357.3 L771.5 364.3 L770.1 371.3 L768.8 378.4 L767.5 385.4 L766.1 392.4 L764.8 399.5 L763.6 406.5 L762.3 413.5 L761.0 420.6 L759.8 427.6 L758.5 434.6 L757.3 441.7 L756.1 448.7 L754.9 455.7 L753.7 462.8 L752.5 469.8 L751.4 476.8 L750.3 483.9 L749.1 490.9 L748.0 497.9 L746.9 505.0 L745.8 512.0" stroke="#6890cc" stroke-width="0.9" fill="none" />
<path d="M822.2 162.0 L820.9 167.3 L819.6 172.7 L818.4 178.0 L817.1 183.3 L815.9 188.7 L814.6 194.0 L813.4 199.3 L812.2 204.6 L810.9 210.0 L809.7 215.3 L808.5 220.6 L807.3 226.0 L806.1 231.3 L804.9 236.6 L803.7 242.0 L802.5 247.3 L801.4 252.6 L800.2 257.9 L799.0 263.3 L797.9 268.6 L796.7 273.9 L795.6 279.3 L794.5 284.6 L793.3 289.9 L792.2 295.3 L791.1 300.6 L790.0 305.9 L788.9 311.3 L787.8 316.6 L786.7 321.9 L785.6 327.2 L784.6 332.6 L783.5 337.9 L782.4 343.2 L781.4 348.6 L780.3 353.9 L779.3 359.2 L778.2 364.6 L777.2 369.9 L776.2 375.2 L775.2 380.6 L774.2 385.9 L773.2 391.2 L772.2 396.5 L771.2 401.9 L770.2 407.2 L769.2 412.5 L768.3 417.9 L767.3 423.2 L766.4 428.5 L765.4 433.9 L764.5 439.2 L763.5 444.5 L762.6 449.8 L761.7 455.2 L760.8 460.5 L759.9 465.8 L759.0 471.2 L758.1 476.5" stroke="#6890cc" stroke-width="0.9" fill="none" />
<path d="M664.0 410.8 L661.7 407.3 L659.6 403.7 L657.5 400.0 L655.5 396.3 L653.6 392.6 L651.8 388.8 L650.1 384.9 L648.6 381.0 L647.1 377.1 L645.7 373.1 L644.5 369.1 L643.3 365.1 L642.3 361.0 L641.3 356.9 L640.5 352.8 L639.8 348.6 L639.1 344.4 L638.6 340.3 L638.2 336.1 L638.0 331.9 L637.8 327.7 L637.7 323.4 L637.8 319.2 L637.9 315.0 L638.2 310.8 L638.6 306.6 L639.1 302.4 L639.7 298.2 L640.4 294.1 L641.2 289.9 L642.2 285.8 L643.2 281.7 L644.4 277.6 L645.6 273.6 L647.0 269.6 L648.5 265.6 L650.0 261.7 L651.7 257.8 L653.5 254.0 L655.4 250.2 L657.3 246.4 L659.4 242.7 L661.6 239.1 L663.8 235.5 L666.2 232.0 L668.6 228.5 L671.2 225.1 L673.8 221.8 L676.5 218.5 L679.3 215.3 L682.2 212.2 L685.2 209.1 L688.2 206.2 L691.3 203.3 L694.5 200.5 L697.8 197.8 L701.1 195.1 L704.5 192.6 L708.0 190.1 L711.5 187.8 L715.1 185.5 L718.7 183.3 L722.4 181.2 L726.2 179.2 L730.0 177.3 L733.9 175.5 L737.8 173.9 L741.7 172.3 L745.7 170.8 L749.7 169.4 L753.7 168.1 L757.8 167.0 L761.9 165.9 L766.1 165.0 L770.2 164.1 L774.4 163.4 L778.6 162.7 L782.8 162.2 L787.0 161.8 L791.2 161.5 L795.5 161.3 L799.7 161.3 L803.9 161.3 L808.2 161.4 L812.4 161.7 L816.6 162.1 L820.8 162.5 L825.0 163.1 L829.2 163.8 L833.3 164.6 L837.4 165.6 L841.5 166.6 L845.6 167.7 L849.6 168.9 L853.6 170.3 L857.6 171.7 L861.5 173.3 L865.4 174.9 L869.2 176.7 L873.0 178.5 L876.8 180.5 L880.4 182.6 L884.1 184.7 L887.6 186.9 L891.1 189.3 L894.6 191.7 L897.9 194.2 L901.2 196.8 L904.5 199.5 L907.6 202.3 L910.7 205.1 L913.7 208.1 L916.6 211.1 L919.5 214.2 L922.3 217.4 L924.9 220.6 L927.5 223.9 L930.0 227.3 L932.4 230.7 L934.8 234.2 L937.0 237.8 L939.1 241.4 L941.1 245.1 L943.1 248.8 L944.9 252.6 L946.6 256.4 L948.3 260.3 L949.8 264.2 L951.2 268.2 L952.5 272.2 L953.7 276.2 L954.9 280.3 L955.9 284.3 L956.7 288.5 L957.5 292.6 L958.2 296.8 L958.7 300.9 L959.2 305.1 L959.5 309.3 L959.8 313.5 L959.9 317.7 L959.9 321.9 L959.8 326.2 L959.6 330.4 L959.2 334.6 L958.8 338.8 L958.2 343.0 L957.6 347.1 L956.8 351.3 L955.9 355.4 L954.9 359.5 L953.8 363.6 L952.6 367.7 L951.3 371.7 L949.9 375.7 L948.4 379.6 L946.8 383.5 L945.0 387.4 L943.2 391.2 L941.3 395.0 L939.3 398.7 L937.1 402.4 L934.9 406.0 L932.6 409.6 L930.2 413.1 L927.7 416.5 L925.1 419.9 L922.5 423.2 L919.7 426.4 L916.9 429.5 L913.9 432.6 L910.9 435.6 L907.9 438.6 L904.7 441.4 L901.5 444.2 L898.2 446.8 L894.8 449.4 L891.4 451.9 L887.9 454.4 L884.3 456.7 L880.7 458.9 L877.0 461.0 L873.3 463.1 L869.5 465.0 L865.7 466.9 L861.8 468.6 L857.9 470.2 L853.9 471.8 L849.9 473.2 L845.9 474.5 L841.8 475.7 L837.7 476.9 L833.6 477.9 L829.5 478.8 L825.3 479.6 L821.1 480.2 L816.9 480.8 L812.7 481.3 L808.5 481.6 L804.3 481.9 L800.0 482.0 L795.8 482.0 L791.6 481.9 L787.3 481.7 L783.1 481.4 L778.9 481.0 L774.7 480.5 L770.5 479.8 L766.4 479.1 L762.2 478.2 L758.1 477.2 L754.0 476.2 L750.0 475.0 L746.0 473.7 L742.0 472.3 L738.0 470.8 L734.1 469.2 L730.3 467.5 L726.5 465.7 L722.7 463.8 L719.0 461.8 L715.4 459.7 L711.8 457.5 L708.2 455.2 L704.8 452.8 L701.4 450.3 L698.0 447.8 L694.8 445.1 L691.6 442.4 L688.4 439.6 L685.4 436.7 L682.4 433.7 L679.5 430.6 L676.7 427.5 L674.0 424.3 L671.4 421.0 L668.8 417.7 L666.4 414.3 L664.0 410.8" stroke="#6890cc" stroke-width="1.2" fill="none" /></g>
<g clip-path="url(#ins)" opacity="0.85"><path d="M675.6 133.3 L680.7 130.0 L685.9 126.9 L691.2 123.9 L696.5 121.0 L702.0 118.3 L707.5 115.7 L713.0 113.3 L718.7 111.0 L724.4 108.9 L730.1 106.9 L735.9 105.1 L741.8 103.5 L747.7 101.9 L753.6 100.6 L759.6 99.4 L765.6 98.4 L771.6 97.5 L777.6 96.8 L783.7 96.2 L789.8 95.8 L795.8 95.6 L801.9 95.5 L808.0 95.6 L814.1 95.8 L820.2 96.2 L826.3 96.8 L832.3 97.5 L838.4 98.4 L844.4 99.4 L850.4 100.6 L856.3 102.0 L862.3 103.5 L868.1 105.2 L874.0 107.0 L879.8 109.0 L885.5 111.1 L891.2 113.4 L896.8 115.8 L902.4 118.4 L907.8 121.1 L913.3 123.9 L918.6 126.9 L923.9 130.1 L929.0 133.4 L934.1 136.8 L939.1 140.3 L944.0 144.0 L948.9 147.8 L953.6 151.7 L958.2 155.8 L962.7 160.0 L967.1 164.2 L971.3 168.6 L975.5 173.2 L979.6 177.8 L983.5 182.5 L987.3 187.3 L991.0 192.2 L994.5 197.2 L997.9 202.3 L1001.2 207.5 L1004.3 212.8 L1007.3 218.2 L1010.2 223.6 L1012.9 229.1 L1015.5 234.7 L1017.9 240.3 L1020.2 246.0 L1022.4 251.8 L1024.4 257.6 L1026.2 263.4 L1027.9 269.3 L1029.4 275.3 L1030.8 281.2 L1032.0 287.2 L1033.0 293.3 L1033.9 299.3 L1034.7 305.4 L1035.2 311.5 L1035.7 317.6 L1035.9 323.8 L1036.0 329.9 L1035.9 336.0 L1035.7 342.1 L1035.3 348.2 L1034.8 354.3 L1034.1 360.4 L1033.2 366.4 L1032.2 372.5 L1031.0 378.4 L1029.7 384.4 L1028.2 390.3 L1026.6 396.2 L1024.8 402.0 L1022.8 407.8 L1020.7 413.5 L1018.5 419.2 L1016.1 424.8 L1013.5 430.3 L1010.9 435.8 L1008.0 441.2 L1005.0 446.5 L1001.9 451.7 L998.7 456.9 L995.3 461.9 L991.8 466.9 L988.1 471.8 L984.4 476.5 L980.5 481.2 L976.5 485.8 L972.3 490.2 L968.1 494.6 L963.7 498.8 L959.2 502.9 L954.6 506.9 L949.9 510.8 L945.2 514.5 L940.3 518.1 L935.3 521.6 L930.2 524.9 L925.1 528.1 L919.8 531.2 L914.5 534.1 L909.1 536.9 L903.6 539.6 L898.1 542.1 L892.5 544.4 L886.8 546.6 L881.1 548.7 L875.3 550.6 L869.5 552.3 L863.6 553.9 L857.7 555.3 L851.8 556.6 L845.8 557.7 L839.8 558.7 L833.7 559.5 L827.7 560.1 L821.6 560.6 L815.5 560.9 L809.4 561.1 L803.3 561.1 L797.2 560.9 L791.2 560.6 L785.1 560.1 L779.0 559.5 L773.0 558.7 L766.9 557.7 L760.9 556.6 L755.0 555.3 L749.0 553.9 L743.1 552.3 L737.3 550.5 L731.4 548.6 L725.7 546.6 L720.0 544.4 L714.3 542.0 L708.7 539.5 L703.2 536.9 L697.8 534.1 L692.4 531.2 L687.1 528.1 L681.9 524.9 L676.7 521.5 L671.7 518.1 L666.7 514.4 L661.9 510.7 L657.1 506.8 L652.4 502.8 L647.9 498.7 L643.4 494.5 L639.1 490.2 L634.9 485.7 L630.8 481.1 L626.8 476.5 L622.9 471.7 L619.2 466.8 L615.6 461.9 L612.1 456.8 L608.8 451.7 L605.5 446.4 L602.5 441.1 L599.5 435.7 L596.7 430.3 L594.1 424.7 L591.6 419.1 L589.2 413.4 L587.0 407.7 L585.0 401.9 L583.0 396.1 L581.3 390.2 L579.7 384.3 L578.2 378.3 L576.9 372.4 L575.8 366.3 L574.8 360.3 L574.0 354.2 L573.4 348.1 L572.9 342.0 L572.5 335.9 L572.3 329.8 L572.3 323.7 L572.5 317.5 L572.8 311.4 L573.2 305.3 L573.9 299.2 L574.6 293.2 L575.6 287.1 L576.7 281.1 L577.9 275.2 L579.3 269.2 L580.9 263.3 L582.6 257.5 L584.5 251.7 L586.5 245.9 L588.7 240.2 L591.0 234.6 L593.5 229.0 L596.1 223.5 L598.9 218.1 L601.8 212.7 L604.8 207.5 L608.0 202.3 L611.3 197.2 L614.8 192.2 L618.4 187.2 L622.1 182.4 L625.9 177.7 L629.9 173.1 L633.9 168.6 L638.1 164.2 L642.4 159.9 L646.9 155.7 L651.4 151.7 L656.0 147.7 L660.8 143.9 L665.6 140.3 L670.5 136.7 L675.6 133.3" stroke="#6890cc" stroke-width="0.9" fill="none" />
<path d="M597.0 224.8 L597.4 223.4 L597.9 222.0 L598.4 220.7 L598.9 219.3 L599.4 218.0 L600.0 216.7 L600.7 215.4 L601.3 214.0 L602.0 212.7 L602.7 211.5 L603.5 210.2 L604.3 208.9 L605.1 207.6 L606.0 206.4 L606.9 205.1 L607.8 203.9 L608.7 202.7 L609.7 201.5 L610.8 200.3 L611.8 199.1 L612.9 198.0 L614.0 196.8 L615.2 195.7 L616.4 194.5 L617.6 193.4 L618.8 192.3 L620.1 191.2 L621.4 190.1 L622.8 189.1 L624.1 188.0 L625.5 187.0 L627.0 185.9 L628.4 184.9 L629.9 183.9 L631.5 182.9 L633.0 182.0 L634.6 181.0 L636.2 180.1 L637.8 179.2 L639.5 178.2 L641.2 177.3 L642.9 176.5 L644.7 175.6 L646.5 174.8 L648.3 173.9 L650.1 173.1 L651.9 172.3 L653.8 171.5 L655.7 170.8 L657.7 170.0 L659.6 169.3 L661.6 168.6 L663.6 167.9 L665.7 167.2 L667.7 166.5 L669.8 165.9 L671.9 165.2 L674.0 164.6 L676.2 164.0 L678.3 163.5 L680.5 162.9 L682.7 162.4 L685.0 161.8 L687.2 161.3 L689.5 160.8 L691.8 160.4 L694.1 159.9 L696.5 159.5 L698.8 159.1 L701.2 158.7 L703.6 158.3 L706.0 157.9 L708.4 157.6 L710.8 157.3 L713.3 157.0 L715.8 156.7 L718.3 156.4 L720.8 156.2 L723.3 155.9 L725.8 155.7 L728.4 155.5 L730.9 155.3 L733.5 155.2 L736.1 155.1 L738.7 154.9 L741.3 154.8 L744.0 154.8 L746.6 154.7 L749.2 154.7 L751.9 154.7 L754.6 154.6 L757.2 154.7 L759.9 154.7 L762.6 154.8 L765.3 154.8 L768.1 154.9 L770.8 155.0 L773.5 155.2 L776.2 155.3 L779.0 155.5 L781.7 155.7 L784.5 155.9 L787.2 156.1 L790.0 156.4 L792.7 156.6 L795.5 156.9 L798.3 157.2 L801.1 157.5 L803.8 157.9 L806.6 158.2 L809.4 158.6 L812.2 159.0 L815.0 159.4 L817.7 159.9 L820.5 160.3 L823.3 160.8 L826.1 161.3 L828.8 161.8 L831.6 162.3 L834.4 162.8 L837.2 163.4 L839.9 164.0 L842.7 164.5 L845.4 165.2 L848.2 165.8 L850.9 166.4 L853.7 167.1 L856.4 167.8 L859.1 168.5 L861.8 169.2 L864.6 169.9 L867.3 170.7 L870.0 171.4 L872.6 172.2 L875.3 173.0 L878.0 173.8 L880.6 174.6 L883.3 175.5 L885.9 176.3 L888.5 177.2 L891.2 178.1 L893.8 179.0 L896.3 179.9 L898.9 180.9 L901.5 181.8 L904.0 182.8 L906.6 183.8 L909.1 184.8 L911.6 185.8 L914.1 186.8 L916.5 187.8 L919.0 188.9 L921.4 190.0 L923.9 191.0 L926.3 192.1 L928.7 193.2 L931.0 194.4 L933.4 195.5 L935.7 196.6 L938.0 197.8 L940.3 199.0 L942.6 200.1 L944.8 201.3 L947.1 202.5 L949.3 203.7 L951.5 205.0 L953.6 206.2 L955.8 207.5 L957.9 208.7 L960.0 210.0 L962.1 211.3 L964.1 212.6 L966.1 213.9 L968.1 215.2 L970.1 216.5 L972.1 217.8 L974.0 219.1 L975.9 220.5 L977.8 221.8 L979.6 223.2 L981.5 224.6 L983.3 226.0 L985.0 227.3 L986.8 228.7 L988.5 230.1 L990.2 231.5 L991.9 233.0 L993.5 234.4 L995.1 235.8 L996.7 237.2 L998.2 238.7 L999.7 240.1 L1001.2 241.6 L1002.7 243.0 L1004.1 244.5 L1005.5 246.0 L1006.9 247.4 L1008.2 248.9 L1009.5 250.4 L1010.8 251.9 L1012.0 253.4 L1013.3 254.8 L1014.4 256.3 L1015.6 257.8 L1016.7 259.3 L1017.8 260.8 L1018.8 262.3 L1019.9 263.8 L1020.8 265.3 L1021.8 266.9 L1022.7 268.4 L1023.6 269.9 L1024.5 271.4 L1025.3 272.9 L1026.1 274.4 L1026.8 275.9 L1027.5 277.4 L1028.2 278.9 L1028.9 280.4 L1029.5 282.0 L1030.1 283.5 L1030.6 285.0 L1031.1 286.5 L1031.6 288.0 L1032.1 289.5 L1032.5 291.0 L1032.8 292.5 L1033.2 294.0 L1033.5 295.4 L1033.8 296.9 L1034.0 298.4 L1034.2 299.9 L1034.4 301.4 L1034.5 302.8 L1034.6 304.3 L1034.6 305.8 L1034.7 307.2 L1034.7 308.7 L1034.6 310.1" stroke="#6890cc" stroke-width="0.9" fill="none" />
<path d="M652.7 245.8 L653.5 245.1 L654.3 244.3 L655.1 243.6 L655.9 242.9 L656.8 242.2 L657.6 241.5 L658.5 240.8 L659.4 240.1 L660.2 239.4 L661.2 238.8 L662.1 238.1 L663.0 237.4 L663.9 236.8 L664.9 236.2 L665.8 235.5 L666.8 234.9 L667.8 234.3 L668.8 233.7 L669.8 233.1 L670.8 232.5 L671.9 231.9 L672.9 231.3 L674.0 230.7 L675.0 230.2 L676.1 229.6 L677.2 229.0 L678.3 228.5 L679.4 228.0 L680.5 227.4 L681.6 226.9 L682.7 226.4 L683.9 225.9 L685.0 225.4 L686.2 224.9 L687.4 224.5 L688.6 224.0 L689.8 223.5 L691.0 223.1 L692.2 222.6 L693.4 222.2 L694.6 221.8 L695.9 221.4 L697.1 221.0 L698.4 220.6 L699.7 220.2 L700.9 219.8 L702.2 219.4 L703.5 219.0 L704.8 218.7 L706.1 218.3 L707.4 218.0 L708.8 217.7 L710.1 217.3 L711.4 217.0 L712.8 216.7 L714.1 216.4 L715.5 216.2 L716.9 215.9 L718.3 215.6 L719.6 215.4 L721.0 215.1 L722.4 214.9 L723.8 214.6 L725.2 214.4 L726.7 214.2 L728.1 214.0 L729.5 213.8 L731.0 213.6 L732.4 213.4 L733.8 213.3 L735.3 213.1 L736.8 213.0 L738.2 212.8 L739.7 212.7 L741.2 212.6 L742.7 212.5 L744.1 212.4 L745.6 212.3 L747.1 212.2 L748.6 212.1 L750.1 212.1 L751.6 212.0 L753.2 212.0 L754.7 212.0 L756.2 211.9 L757.7 211.9 L759.3 211.9 L760.8 211.9 L762.3 211.9 L763.9 211.9 L765.4 212.0 L767.0 212.0 L768.5 212.1 L770.1 212.1 L771.6 212.2 L773.2 212.3 L774.7 212.4 L776.3 212.5 L777.9 212.6 L779.4 212.7 L781.0 212.8 L782.6 212.9 L784.1 213.1 L785.7 213.2 L787.3 213.4 L788.8 213.6 L790.4 213.8 L792.0 213.9 L793.6 214.1 L795.2 214.4 L796.7 214.6 L798.3 214.8 L799.9 215.0 L801.5 215.3 L803.1 215.5 L804.6 215.8 L806.2 216.1 L807.8 216.4 L809.4 216.6 L811.0 216.9 L812.5 217.3 L814.1 217.6 L815.7 217.9 L817.3 218.2 L818.8 218.6 L820.4 218.9 L822.0 219.3 L823.5 219.7 L825.1 220.1 L826.7 220.4 L828.2 220.8 L829.8 221.2 L831.3 221.7 L832.9 222.1 L834.5 222.5 L836.0 223.0 L837.6 223.4 L839.1 223.9 L840.6 224.3 L842.2 224.8 L843.7 225.3 L845.2 225.8 L846.8 226.3 L848.3 226.8 L849.8 227.3 L851.3 227.8 L852.8 228.4 L854.3 228.9 L855.8 229.4 L857.3 230.0 L858.8 230.6 L860.3 231.1 L861.8 231.7 L863.3 232.3 L864.8 232.9 L866.2 233.5 L867.7 234.1 L869.1 234.7 L870.6 235.3 L872.0 236.0 L873.5 236.6 L874.9 237.3 L876.3 237.9 L877.8 238.6 L879.2 239.2 L880.6 239.9 L882.0 240.6 L883.4 241.3 L884.8 242.0 L886.1 242.7 L887.5 243.4 L888.9 244.1 L890.2 244.8 L891.6 245.6 L892.9 246.3 L894.3 247.1 L895.6 247.8 L896.9 248.6 L898.2 249.3 L899.5 250.1 L900.8 250.9 L902.1 251.6 L903.4 252.4 L904.6 253.2 L905.9 254.0 L907.2 254.8 L908.4 255.6 L909.6 256.5 L910.9 257.3 L912.1 258.1 L913.3 258.9 L914.5 259.8 L915.7 260.6 L916.8 261.5 L918.0 262.3 L919.2 263.2 L920.3 264.1 L921.5 264.9 L922.6 265.8 L923.7 266.7 L924.8 267.6 L925.9 268.5 L927.0 269.3 L928.1 270.2 L929.1 271.1 L930.2 272.1 L931.2 273.0 L932.3 273.9 L933.3 274.8 L934.3 275.7 L935.3 276.7 L936.3 277.6 L937.3 278.5 L938.2 279.5 L939.2 280.4 L940.1 281.4 L941.1 282.3 L942.0 283.3 L942.9 284.2 L943.8 285.2 L944.7 286.1 L945.5 287.1 L946.4 288.1 L947.2 289.0 L948.1 290.0 L948.9 291.0 L949.7 292.0 L950.5 293.0 L951.3 294.0 L952.1 294.9 L952.8 295.9 L953.6 296.9 L954.3 297.9 L955.0 298.9 L955.7 299.9 L956.4 300.9 L957.1 301.9 L957.8 302.9 L958.4 303.9" stroke="#6890cc" stroke-width="0.9" fill="none" />
<path d="M833.1 97.0 L831.2 104.0 L829.3 111.1 L827.5 118.1 L825.7 125.1 L823.9 132.2 L822.1 139.2 L820.3 146.2 L818.5 153.3 L816.7 160.3 L815.0 167.3 L813.2 174.4 L811.5 181.4 L809.8 188.4 L808.1 195.5 L806.4 202.5 L804.8 209.5 L803.1 216.6 L801.5 223.6 L799.9 230.6 L798.2 237.7 L796.6 244.7 L795.1 251.7 L793.5 258.8 L791.9 265.8 L790.4 272.8 L788.8 279.9 L787.3 286.9 L785.8 293.9 L784.3 301.0 L782.8 308.0 L781.4 315.1 L779.9 322.1 L778.5 329.1 L777.1 336.2 L775.7 343.2 L774.3 350.2 L772.9 357.3 L771.5 364.3 L770.1 371.3 L768.8 378.4 L767.5 385.4 L766.1 392.4 L764.8 399.5 L763.6 406.5 L762.3 413.5 L761.0 420.6 L759.8 427.6 L758.5 434.6 L757.3 441.7 L756.1 448.7 L754.9 455.7 L753.7 462.8 L752.5 469.8 L751.4 476.8 L750.3 483.9 L749.1 490.9 L748.0 497.9 L746.9 505.0 L745.8 512.0" stroke="#6890cc" stroke-width="0.9" fill="none" />
<path d="M822.2 162.0 L820.9 167.3 L819.6 172.7 L818.4 178.0 L817.1 183.3 L815.9 188.7 L814.6 194.0 L813.4 199.3 L812.2 204.6 L810.9 210.0 L809.7 215.3 L808.5 220.6 L807.3 226.0 L806.1 231.3 L804.9 236.6 L803.7 242.0 L802.5 247.3 L801.4 252.6 L800.2 257.9 L799.0 263.3 L797.9 268.6 L796.7 273.9 L795.6 279.3 L794.5 284.6 L793.3 289.9 L792.2 295.3 L791.1 300.6 L790.0 305.9 L788.9 311.3 L787.8 316.6 L786.7 321.9 L785.6 327.2 L784.6 332.6 L783.5 337.9 L782.4 343.2 L781.4 348.6 L780.3 353.9 L779.3 359.2 L778.2 364.6 L777.2 369.9 L776.2 375.2 L775.2 380.6 L774.2 385.9 L773.2 391.2 L772.2 396.5 L771.2 401.9 L770.2 407.2 L769.2 412.5 L768.3 417.9 L767.3 423.2 L766.4 428.5 L765.4 433.9 L764.5 439.2 L763.5 444.5 L762.6 449.8 L761.7 455.2 L760.8 460.5 L759.9 465.8 L759.0 471.2 L758.1 476.5" stroke="#6890cc" stroke-width="0.9" fill="none" />
<path d="M664.0 410.8 L661.7 407.3 L659.6 403.7 L657.5 400.0 L655.5 396.3 L653.6 392.6 L651.8 388.8 L650.1 384.9 L648.6 381.0 L647.1 377.1 L645.7 373.1 L644.5 369.1 L643.3 365.1 L642.3 361.0 L641.3 356.9 L640.5 352.8 L639.8 348.6 L639.1 344.4 L638.6 340.3 L638.2 336.1 L638.0 331.9 L637.8 327.7 L637.7 323.4 L637.8 319.2 L637.9 315.0 L638.2 310.8 L638.6 306.6 L639.1 302.4 L639.7 298.2 L640.4 294.1 L641.2 289.9 L642.2 285.8 L643.2 281.7 L644.4 277.6 L645.6 273.6 L647.0 269.6 L648.5 265.6 L650.0 261.7 L651.7 257.8 L653.5 254.0 L655.4 250.2 L657.3 246.4 L659.4 242.7 L661.6 239.1 L663.8 235.5 L666.2 232.0 L668.6 228.5 L671.2 225.1 L673.8 221.8 L676.5 218.5 L679.3 215.3 L682.2 212.2 L685.2 209.1 L688.2 206.2 L691.3 203.3 L694.5 200.5 L697.8 197.8 L701.1 195.1 L704.5 192.6 L708.0 190.1 L711.5 187.8 L715.1 185.5 L718.7 183.3 L722.4 181.2 L726.2 179.2 L730.0 177.3 L733.9 175.5 L737.8 173.9 L741.7 172.3 L745.7 170.8 L749.7 169.4 L753.7 168.1 L757.8 167.0 L761.9 165.9 L766.1 165.0 L770.2 164.1 L774.4 163.4 L778.6 162.7 L782.8 162.2 L787.0 161.8 L791.2 161.5 L795.5 161.3 L799.7 161.3 L803.9 161.3 L808.2 161.4 L812.4 161.7 L816.6 162.1 L820.8 162.5 L825.0 163.1 L829.2 163.8 L833.3 164.6 L837.4 165.6 L841.5 166.6 L845.6 167.7 L849.6 168.9 L853.6 170.3 L857.6 171.7 L861.5 173.3 L865.4 174.9 L869.2 176.7 L873.0 178.5 L876.8 180.5 L880.4 182.6 L884.1 184.7 L887.6 186.9 L891.1 189.3 L894.6 191.7 L897.9 194.2 L901.2 196.8 L904.5 199.5 L907.6 202.3 L910.7 205.1 L913.7 208.1 L916.6 211.1 L919.5 214.2 L922.3 217.4 L924.9 220.6 L927.5 223.9 L930.0 227.3 L932.4 230.7 L934.8 234.2 L937.0 237.8 L939.1 241.4 L941.1 245.1 L943.1 248.8 L944.9 252.6 L946.6 256.4 L948.3 260.3 L949.8 264.2 L951.2 268.2 L952.5 272.2 L953.7 276.2 L954.9 280.3 L955.9 284.3 L956.7 288.5 L957.5 292.6 L958.2 296.8 L958.7 300.9 L959.2 305.1 L959.5 309.3 L959.8 313.5 L959.9 317.7 L959.9 321.9 L959.8 326.2 L959.6 330.4 L959.2 334.6 L958.8 338.8 L958.2 343.0 L957.6 347.1 L956.8 351.3 L955.9 355.4 L954.9 359.5 L953.8 363.6 L952.6 367.7 L951.3 371.7 L949.9 375.7 L948.4 379.6 L946.8 383.5 L945.0 387.4 L943.2 391.2 L941.3 395.0 L939.3 398.7 L937.1 402.4 L934.9 406.0 L932.6 409.6 L930.2 413.1 L927.7 416.5 L925.1 419.9 L922.5 423.2 L919.7 426.4 L916.9 429.5 L913.9 432.6 L910.9 435.6 L907.9 438.6 L904.7 441.4 L901.5 444.2 L898.2 446.8 L894.8 449.4 L891.4 451.9 L887.9 454.4 L884.3 456.7 L880.7 458.9 L877.0 461.0 L873.3 463.1 L869.5 465.0 L865.7 466.9 L861.8 468.6 L857.9 470.2 L853.9 471.8 L849.9 473.2 L845.9 474.5 L841.8 475.7 L837.7 476.9 L833.6 477.9 L829.5 478.8 L825.3 479.6 L821.1 480.2 L816.9 480.8 L812.7 481.3 L808.5 481.6 L804.3 481.9 L800.0 482.0 L795.8 482.0 L791.6 481.9 L787.3 481.7 L783.1 481.4 L778.9 481.0 L774.7 480.5 L770.5 479.8 L766.4 479.1 L762.2 478.2 L758.1 477.2 L754.0 476.2 L750.0 475.0 L746.0 473.7 L742.0 472.3 L738.0 470.8 L734.1 469.2 L730.3 467.5 L726.5 465.7 L722.7 463.8 L719.0 461.8 L715.4 459.7 L711.8 457.5 L708.2 455.2 L704.8 452.8 L701.4 450.3 L698.0 447.8 L694.8 445.1 L691.6 442.4 L688.4 439.6 L685.4 436.7 L682.4 433.7 L679.5 430.6 L676.7 427.5 L674.0 424.3 L671.4 421.0 L668.8 417.7 L666.4 414.3 L664.0 410.8" stroke="#6890cc" stroke-width="1.2" fill="none" /></g>
<path d="M652 215 L661 248 M614 290 L630 319 M979 277 L955 305 M983 371 L956 391 M652 215 L614 290 M661 248 L630 319 M979 277 L983 371 M955 305 L956 391 M652 215 L979 277 M661 248 L955 305 M614 290 L983 371 M630 319 L956 391" stroke="#84d872" stroke-width="0.9" fill="none"/>
<!-- audio icon -->
<path d="M791 313.6 H794.4 L796.2 312 V318.3 L794.4 316.6 H791 Z" fill="#f2f2f2"/>
<!-- transform gizmo -->
<path d="M885.5 335 L890.4 326 L910 330 L906 338.5 Z" fill="#5a72c8" fill-opacity="0.55" stroke="#4d7ae6" stroke-width="1"/>
<path d="M885.5 335 L906 338.5 L906 357.4 L884.5 353.5 Z" fill="#6aa040" fill-opacity="0.6" stroke="#a8e060" stroke-width="1"/>
<path d="M906 338.5 L910 330 L912 346.7 L906 357.4 Z" fill="#b04a40" fill-opacity="0.45" stroke="#e05a40" stroke-width="1"/>
<path d="M906 338.5 L833 323" stroke="#ee4a28" stroke-width="1.3"/>
<path d="M817 320.3 L834 317 L833 329.5 Z" fill="#f04a22"/>
<path d="M906 338.5 L926.5 309.5" stroke="#8fd840" stroke-width="1.4"/>
<path d="M937.6 293 L935.1 306.6 A6.2 6.2 0 0 1 925.8 300.2 Z" fill="#7fd038"/>
<circle cx="929" cy="305.5" r="6.2" fill="#7fd038"/>
<path d="M937.6 293 L926.5 300 Q926 305 929 308 Z" fill="#a4e85a" opacity="0.75"/>
<path d="M906 338.5 L902.5 409" stroke="#3a82f0" stroke-width="1.4"/>
<path d="M900.8 430.7 L895 409 Q902 407 909.5 411 Z" fill="#3580f5"/>
<path d="M900.8 430.7 L903 410 L909.5 411 Z" fill="#2a62c8"/>
<!-- orientation gizmo -->
<path d="M1194.5 77.5 L1214 74 L1214 88 Z" fill="#dcdcdc"/>
<path d="M1191 66 L1196.8 56.2" stroke="#cfcfcf" stroke-width="2"/>
<path d="M1185.3 82 H1191.2 V92 H1185.3 Z" fill="#d8d8d8"/>
<path d="M1178.3 66.5 H1193.8 V83 H1178.3 Z" fill="#f0f0f0"/>
<path d="M1178.3 78.5 H1192.5 V84 H1178.3 Z" fill="#c4c4c4"/>
<path d="M1158 65 L1178.5 74.7 L1158.3 76.8 Q1156.5 71 1158 65 Z" fill="#e8441c"/>
<path d="M1177 54.2 L1186.5 70.5 L1196 54.2 Z" fill="#3d7322"/>
<ellipse cx="1186.5" cy="54.2" rx="9.6" ry="6.3" fill="#a6e65c"/>
<path d="M1184.9 83.2 L1170.9 101.3 Q1178 106 1186.1 105.8 Z" fill="#3473f2"/>
<path d="M1184.9 83.2 L1186.1 105.8 L1181 104.5 Z" fill="#2659c8"/>
<g fill="#f4f4f4" font-family="Liberation Sans" font-weight="bold" font-size="11.5">
<text x="1181" y="44.6">y</text><text x="1148.2" y="72.2">x</text><text x="1171.3" y="115.3">z</text>
</g>
<path d="M1171.7 121 L1162 125.7 L1171.7 130.8 M1162 125.7 H1171.7" stroke="#c8ccd2" stroke-width="0.9" fill="none"/>
<text x="1175.3" y="130.2" fill="#c8ccd2" font-family="Liberation Sans" font-size="12.5">Persp</text>
</g>
</svg><!--/SCENE-->
<!-- BOTTOM -->
<div class="a" style="left:0;top:512px;width:1213px;height:2px;background:#191919"></div>
<div class="a" style="left:0;top:514px;width:1213px;height:19px;background:#282828"></div>
<div class="a" style="left:0;top:514px;width:18px;height:19px;background:#3c3c3c"></div>
<div class="a" style="left:0;top:514px;width:18px;height:2px;background:#3a79bb"></div>
<svg style="left:0;top:513px" width="1213" height="20">
  <rect x="28" y="5" width="10.5" height="11" rx="1" fill="#d4d4d4"/>
  <g stroke="#282828" stroke-width="1.1" stroke-linecap="round"><path d="M29.8 6.9 H34.6 M29.8 8.9 H36.6 M29.8 10.9 H34.6 M29.8 12.9 H36.6"/></g>
  <rect x="115" y="6" width="12" height="2" fill="#d4d4d4"/>
  <rect x="116" y="9" width="10" height="7" fill="#d4d4d4"/>
  <rect x="118.4" y="11.3" width="5.6" height="1.4" rx="0.7" fill="#282828"/>
  <circle cx="265.9" cy="10.9" r="6.2" fill="#d4d4d4"/>
  <path d="M266 6.6 V11.4 H270.3" stroke="#555" stroke-width="1.6" fill="none"/>
  <g transform="translate(363.8,10.9)">
    <path fill="#d4d4d4" fill-rule="evenodd" d="M-1.5 -6.2 H1.5 L1.9 -4.3 L3.5 -3.4 L5.3 -4.1 L6.8 -1.5 L5.4 -0.3 L5.4 0.3 L6.8 1.5 L5.3 4.1 L3.5 3.4 L1.9 4.3 L1.5 6.2 H-1.5 L-1.9 4.3 L-3.5 3.4 L-5.3 4.1 L-6.8 1.5 L-5.4 0.3 L-5.4 -0.3 L-6.8 -1.5 L-5.3 -4.1 L-3.5 -3.4 L-1.9 -4.3 Z M0 -2 A2 2 0 1 0 0 2 A2 2 0 1 0 0 -2 Z"/>
  </g>
  <g fill="#d4d4d4">
    <rect x="1203" y="10" width="8.5" height="5.5" rx="0.8"/>
    <path d="M1204.8 10.5 V8.3 A2.4 2.4 0 0 1 1209.6 8.3 V10.5" stroke="#d4d4d4" stroke-width="1.4" fill="none"/>
  </g>
</svg>
<div class="a" style="left:0;top:522px;width:1.5px;height:2.5px;background:#c8c8c8"></div><div class="a" style="left:0;top:527.5px;width:1.5px;height:2px;background:#c8c8c8"></div>
<div class="t" style="left:43px;top:517px">Console</div>
<div class="t" style="left:131px;top:517px">Package Manager</div>
<div class="t" style="left:276px;top:517px">Animation</div>
<div class="t" style="left:374px;top:517px">Project Settings</div>
<!-- toolbar -->
<div class="a" style="left:0;top:533px;width:1213px;height:20px;background:#3c3c3c"></div>
<div class="a" style="left:822px;top:535px;width:300px;height:16px;background:#2a2a2a;border-radius:3px;border:1px solid #212121;border-top-color:#161616"></div>
<div class="a" style="left:1124px;top:533px;width:1px;height:20px;background:#2a2a2a"></div>
<div class="a" style="left:1150px;top:533px;width:1px;height:20px;background:#2a2a2a"></div>
<div class="a" style="left:1176px;top:533px;width:1px;height:20px;background:#2a2a2a"></div>
<div class="a" style="left:1202px;top:533px;width:1px;height:20px;background:#2a2a2a"></div>
<svg style="left:0;top:533px" width="1213" height="20">
  <circle cx="829.5" cy="9.3" r="2.4" stroke="#d0d0d0" stroke-width="1.2" fill="none"/>
  <path d="M831.2 11 L833.8 13.6" stroke="#d0d0d0" stroke-width="1.4"/>
  <g fill="#d0d0d0">
    <rect x="1132" y="3" width="6" height="5.5"/>
    <circle cx="1134" cy="12.8" r="3.2"/>
    <path d="M1139.5 5.5 L1143.3 12.6 L1136.2 12.6 Z"/>
    <path d="M1157 10.6 L1162.3 5 L1167.2 4.8 L1167 9.6 L1161.5 15 Z M1165 6.4 a0.9 0.9 0 1 0 0.01 0Z" fill-rule="evenodd"/>
  </g>
  <path fill="#8a8a8a" d="M1189 4.5 L1190.6 8.7 L1195 8.9 L1191.5 11.6 L1192.8 15.8 L1189 13.3 L1185.2 15.8 L1186.5 11.6 L1183 8.9 L1187.4 8.7 Z"/>
  <path d="M1209 6 a3 3 0 1 1 0 5 L1207 15" stroke="#d0d0d0" stroke-width="1.2" fill="none"/>
</svg>
<div class="a" style="left:0;top:553px;width:1213px;height:1px;background:#232323"></div>
<!-- left tree -->
<div class="a" style="left:0;top:554px;width:200px;height:214px;background:#383838"></div>
<div class="a" style="left:0;top:729px;width:200px;height:16px;background:#4d4d4d"></div>
<svg style="left:0;top:729px" width="20" height="16">
  <path fill="#c8c8c8" d="M-1 2.7 H4.2 L5.6 4.9 H9.9 V12.8 H-1 Z"/>
</svg>
<div class="t b" style="left:-26px;top:554px">Favorites</div>
<div class="t" style="left:3px;top:570px">Materials</div>
<div class="t" style="left:3px;top:586px">Models</div>
<div class="t" style="left:3px;top:602px">Prefabs</div>
<div class="t b" style="left:-24px;top:633px">Assets</div>
<div class="t" style="left:-13px;top:649px">AnimationClip</div>
<div class="t" style="left:-12px;top:665px">AudioClip</div>
<div class="t" style="left:-11px;top:681px">ConveyorPrefab</div>
<div class="t" style="left:1px;top:697px">Materials</div>
<div class="t" style="left:1px;top:713px">Prefab</div>
<div class="t" style="left:15px;top:729px">Sizes</div>
<div class="t" style="left:1px;top:745px">Script</div>
<div class="t" style="left:1px;top:761px">Textures</div>
<div class="a" style="left:200px;top:554px;width:13px;height:214px;background:#2e2e2e"></div>
<div class="a" style="left:202px;top:570px;width:10px;height:198px;background:#5e5e5e;border-radius:5px 5px 0 0"></div>
<svg style="left:200px;top:554px" width="13" height="14"><path d="M3.2 9.8 L6.9 5.8 L10.6 9.8 Z" fill="#d8d8d8"/></svg>
<div class="a" style="left:213px;top:554px;width:1px;height:214px;background:#232323"></div>
<!-- right -->
<div class="a" style="left:214px;top:554px;width:999px;height:20px;background:#3f3f3f"></div>
<div class="a" style="left:214px;top:574px;width:999px;height:1px;background:#272727"></div>
<div class="a" style="left:214px;top:575px;width:999px;height:193px;background:#333333"></div>
<div class="t" style="left:218px;top:556px">Assets</div>
<div class="t" style="left:273px;top:556px">ConveyorPrefab</div>
<div class="t" style="left:383px;top:556px">Prefab</div>
<div class="t b" style="left:438px;top:556px;font-size:12px">Sizes</div>
<svg style="left:0;top:553px" width="500" height="22">
  <g stroke="#999" stroke-width="1.5" fill="none">
    <path d="M262 7.3 L266.5 11.5 L262 15.7"/>
    <path d="M372 7.3 L376.5 11.5 L372 15.7"/>
    <path d="M427 7.3 L431.5 11.5 L427 15.7"/>
  </g>
</svg>
<div class="a" style="left:230px;top:586px;width:68px;height:68px;background:#282828;border-radius:1px"></div>
<div class="a" style="left:231px;top:587px;width:66px;height:66px;background:#525252"></div>
<svg style="left:231px;top:587px" width="66" height="66"><path d="M4.5 41 L24 47 L53 26 L39 24 Z" fill="#333333"/><path d="M16 35.3 L33.7 40 M27.5 29.7 L43.3 33" stroke="#2d2d2d" stroke-width="0.6"/></svg>
<div class="t" style="left:230px;top:656px;font-size:10.5px;letter-spacing:0.05px;color:#c8c8c8">ConveyorPr...</div>
<div class="a" style="left:312px;top:586px;width:68px;height:68px;background:#282828;border-radius:1px"></div>
<div class="a" style="left:313px;top:587px;width:66px;height:66px;background:#525252"></div>
<svg style="left:313px;top:587px" width="66" height="66"><path d="M4.5 41 L24 47 L53 26 L39 24 Z" fill="#333333"/><path d="M16 35.3 L33.7 40 M27.5 29.7 L43.3 33" stroke="#2d2d2d" stroke-width="0.6"/></svg>
<div class="t" style="left:312px;top:656px;font-size:10.5px;letter-spacing:0.05px;color:#c8c8c8">ConveyorPr...</div>
<div class="a" style="left:394px;top:586px;width:68px;height:68px;background:#282828;border-radius:1px"></div>
<div class="a" style="left:395px;top:587px;width:66px;height:66px;background:#525252"></div>
<svg style="left:395px;top:587px" width="66" height="66"><path d="M4.5 41 L24 47 L53 26 L39 24 Z" fill="#333333"/><path d="M16 35.3 L33.7 40 M27.5 29.7 L43.3 33" stroke="#2d2d2d" stroke-width="0.6"/></svg>
<div class="t" style="left:394px;top:656px;font-size:10.5px;letter-spacing:0.05px;color:#c8c8c8">ConveyorPr...</div>
<div class="a" style="left:476px;top:586px;width:68px;height:68px;background:#282828;border-radius:1px"></div>
<div class="a" style="left:477px;top:587px;width:66px;height:66px;background:#525252"></div>
<svg style="left:477px;top:587px" width="66" height="66"><path d="M4.5 41 L24 47 L53 26 L39 24 Z" fill="#333333"/><path d="M16 35.3 L33.7 40 M27.5 29.7 L43.3 33" stroke="#2d2d2d" stroke-width="0.6"/></svg>
<div class="t" style="left:476px;top:656px;font-size:10.5px;letter-spacing:0.05px;color:#c8c8c8">ConveyorPr...</div>
</body></html>
